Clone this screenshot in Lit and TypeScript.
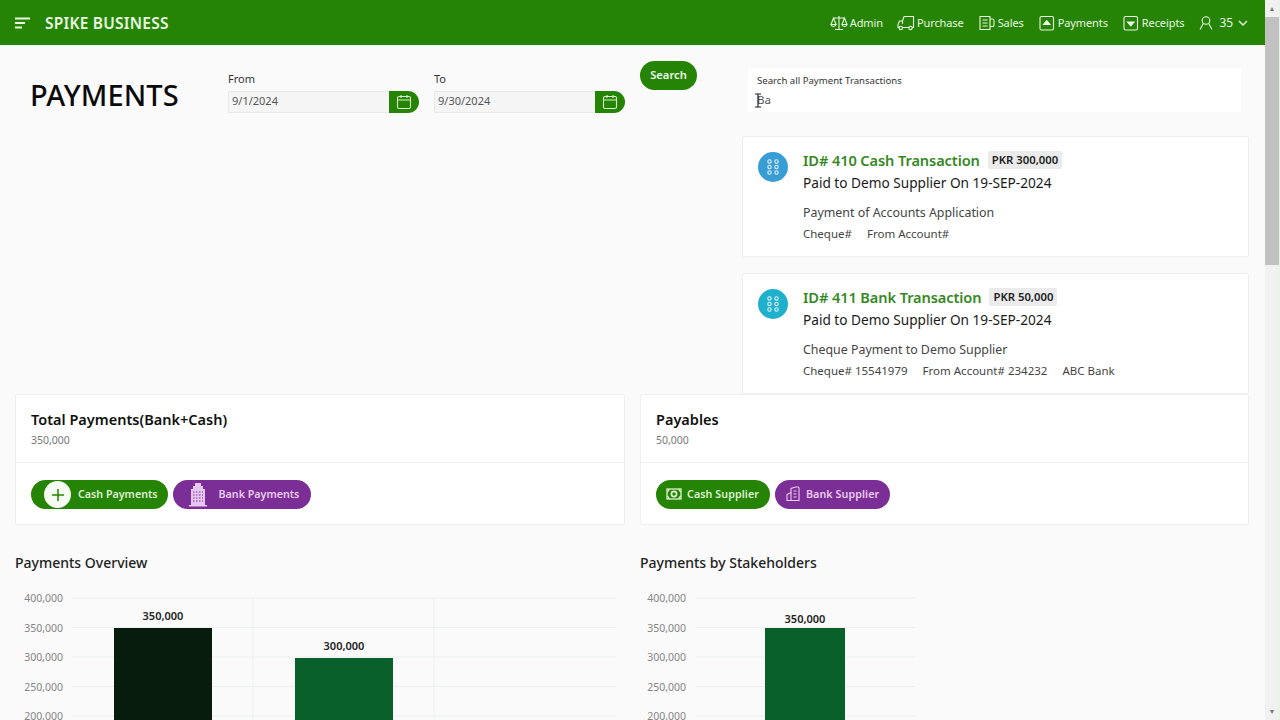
import { LitElement, html, css, svg } from "lit";
import { customElement } from "lit/decorators.js";

const navItems = [
  {
    label: "Admin",
    icon: svg`<path d="M9 2v13M5 15.500h8M3.500 4h11M3.500 4 1 10.500h5L3.500 4ZM14.500 4 12 10.500h5L14.500 4ZM1 10.500c.4 2.600 4.600 2.600 5 0M12 10.500c.4 2.600 4.600 2.600 5 0"/>`,
  },
  {
    label: "Purchase",
    icon: svg`<path d="M6 13.500h6.500M7 2.500h9.500v11H15M7 2.500 5.500 7H2.500L1 10.500v3h1M5.500 7v3"/><circle cx="3.800" cy="14" r="1.700"/><circle cx="13.500" cy="14" r="1.700"/>`,
  },
  {
    label: "Sales",
    icon: svg`<path d="M2 2.500h10v13H2zM4.500 6h5M4.500 9h5M4.500 12h5M12 5h2.500a1.500 1.500 0 0 1 1.500 1.500V11a1.500 1.500 0 0 1-1.500 1.500H12"/>`,
  },
  {
    label: "Payments",
    icon: svg`<rect x="2" y="2.500" width="13.500" height="13.500" rx="1.500"/><path d="M8.750 6.500 12 10.500H5.500Z" fill="currentColor"/>`,
  },
  {
    label: "Receipts",
    icon: svg`<rect x="2" y="2.500" width="13.500" height="13.500" rx="1.500"/><path d="M8.750 12 12 8H5.500Z" fill="currentColor"/>`,
  },
];

const transactions = [
  {
    id: "ID# 410 Cash Transaction",
    amount: "PKR 300,000",
    color: "#389dd4",
    note: "Payment of Accounts Application",
    meta: ["Cheque#", "From Account#"],
  },
  {
    id: "ID# 411 Bank Transaction",
    amount: "PKR 50,000",
    color: "#1fb0cc",
    note: "Cheque Payment to Demo Supplier",
    meta: ["Cheque# 15541979", "From Account# 234232", "ABC Bank"],
  },
];

const ticks = ["400,000", "350,000", "300,000", "250,000", "200,000"];

const calendar = html`<svg viewBox="0 0 16 16" width="16" height="16" fill="none" stroke="currentColor" stroke-width="1.100">
  <rect x="1.500" y="2.500" width="13" height="12" rx="1.500"></rect>
  <path d="M1.500 6h13M5 1v3M11 1v3"></path>
</svg>`;

@customElement("app-root")
export class AppRoot extends LitElement {
  static override styles = css`
    :host {
      display: flex;
      width: 1280px;
      height: 720px;
      overflow: hidden;
      background: #fafafa;
      font-family: "Noto Sans", "Open Sans", sans-serif;
      color: #111;
    }
    .page {
      width: 1265px;
      flex: none;
    }
    .scrollbar {
      width: 15px;
      flex: none;
      display: flex;
      flex-direction: column;
      align-items: stretch;
      background: #f1f1f1;
      box-sizing: border-box;
      border-right: 1px solid #e4f5e0;
    }
    .arrow {
      height: 17px;
      display: flex;
      align-items: center;
      justify-content: center;
      color: #7a7a7a;
      font-size: 7px;
      line-height: 1;
    }
    .thumb {
      height: 248px;
      background: #c1c1c1;
    }
    .track {
      flex: 1;
    }
    .bar {
      height: 45px;
      background: #268404;
      color: #e9f7e2;
      display: flex;
      align-items: center;
      padding: 0 17px 0 15px;
      box-sizing: border-box;
    }
    .burger {
      display: block;
      margin-right: 14px;
    }
    .brand {
      font-size: 15.500px;
      font-weight: 600;
      letter-spacing: 0.220px;
      flex: 1;
    }
    .nav {
      display: flex;
      align-items: center;
      gap: 14px;
      font-size: 11px;
      letter-spacing: -0.100px;
    }
    .nav-item {
      display: flex;
      align-items: center;
      gap: 2px;
    }
    .nav-item svg {
      display: block;
      fill: none;
      stroke: currentColor;
      stroke-width: 1.100;
    }
    .user {
      font-size: 12px;
    }
    .top {
      display: grid;
      grid-template-columns: 610px 609px;
      gap: 15px;
      height: 349px;
      padding-left: 15px;
      overflow: hidden;
    }
    .filters {
      display: flex;
      align-items: flex-start;
      gap: 15px;
      padding: 27px 0 0 15px;
    }
    h1 {
      margin: 3px 34px 0 0;
      width: 149px;
      font-size: 29px;
      line-height: 40px;
      font-weight: 500;
      letter-spacing: 0.100px;
      color: #0b0b0b;
      white-space: nowrap;
    }
    .field {
      width: 191px;
    }
    .field label {
      display: block;
      font-size: 11px;
      line-height: 13px;
      color: #333;
      margin-bottom: 6px;
    }
    .date {
      display: flex;
      height: 22px;
    }
    .date-value {
      flex: 1;
      background: #f5f5f5;
      border: 1px solid #e8e8e8;
      border-right: 0;
      box-sizing: border-box;
      font-size: 11px;
      line-height: 18px;
      color: #555;
      padding-left: 3px;
      border-radius: 2px 0 0 2px;
    }
    .date-btn {
      width: 30px;
      background: #268404;
      color: #d8efcf;
      border-radius: 0 11px 11px 0;
      display: flex;
      align-items: center;
      justify-content: center;
    }
    .results {
      display: flex;
    }
    .search-col {
      width: 102px;
      flex: none;
      padding-top: 16px;
    }
    .search-btn {
      display: inline-block;
      width: 57px;
      height: 29px;
      line-height: 28px;
      text-align: center;
      border-radius: 15px;
      background: #268404;
      color: #eef8e9;
      font-size: 11.200px;
      font-weight: 600;
    }
    .list {
      flex: 1;
      min-width: 0;
    }
    .search-box {
      position: relative;
      height: 44px;
      margin: 23px 8px 24px 6px;
      padding: 6px 9px;
      background: #fff;
      box-sizing: border-box;
    }
    .search-box label {
      display: block;
      font-size: 9.600px;
      line-height: 14px;
      color: #333;
    }
    .search-text {
      font-size: 11.500px;
      line-height: 16px;
      margin-top: 4px;
      color: #555;
    }
    .ibeam {
      position: absolute;
      left: 6px;
      top: 25px;
    }
    .tx {
      display: flex;
      height: 121px;
      box-sizing: border-box;
      margin-bottom: 16px;
      padding: 15px;
      background: #fff;
      border: 1px solid #efefef;
      border-radius: 2px;
    }
    .tx-icon {
      width: 30px;
      height: 30px;
      border-radius: 50%;
      flex: none;
      margin-right: 15px;
      display: flex;
      align-items: center;
      justify-content: center;
    }
    .tx-title {
      display: flex;
      align-items: center;
      gap: 8px;
      height: 20px;
      margin-top: -2px;
    }
    .tx-id {
      font-size: 14.600px;
      font-weight: 600;
      color: #35891f;
      letter-spacing: -0.100px;
    }
    .tx-amount {
      background: #ebebeb;
      border-radius: 2px;
      font-size: 11.300px;
      font-weight: 600;
      line-height: 18px;
      padding: 0 4px;
      color: #222;
    }
    .tx-sub {
      font-size: 13.650px;
      line-height: 18px;
      margin-top: 4px;
      color: #1a1a1a;
    }
    .tx-note {
      font-size: 12.400px;
      line-height: 16px;
      margin-top: 13px;
      color: #444;
    }
    .tx-meta {
      display: flex;
      gap: 15px;
      font-size: 11.500px;
      line-height: 16px;
      margin-top: 5px;
      color: #444;
    }
    .cards {
      display: grid;
      grid-template-columns: 610px 609px;
      gap: 15px;
      padding-left: 15px;
    }
    .card {
      height: 131px;
      background: #fff;
      border: 1px solid #efefef;
      box-sizing: border-box;
      border-radius: 2px;
    }
    .card-head {
      height: 68px;
      padding: 14px 15px 0;
      box-sizing: border-box;
      border-bottom: 1px solid #f0f0f0;
    }
    .card-title {
      font-size: 14.500px;
      line-height: 20px;
      font-weight: 600;
      color: #111;
    }
    .card-value {
      font-size: 10.500px;
      line-height: 14px;
      margin-top: 4px;
      color: #777;
    }
    .pills {
      display: flex;
      gap: 5px;
      padding: 17px 15px 0;
    }
    .pill {
      height: 29px;
      border-radius: 15px;
      display: flex;
      align-items: center;
      gap: 5px;
      padding: 0 12px 2px 10px;
      box-sizing: border-box;
      font-size: 10.700px;
      font-weight: 600;
      white-space: nowrap;
    }
    .pill.green {
      background: #268404;
      color: #dff2d6;
    }
    .pill.purple {
      background: #7b2f96;
      color: #eacdf2;
    }
    .pill.wide {
      gap: 7px;
      padding: 0 10px 2px 13px;
    }
    .pill.building {
      gap: 9px;
      padding-left: 13px;
    }
    .pill.supplier {
      padding-right: 11px;
      letter-spacing: 0.080px;
    }
    .plus {
      width: 27px;
      height: 27px;
      margin-top: 2px;
      border-radius: 50%;
      background: #f6fbf3;
      color: #268404;
      display: flex;
      align-items: center;
      justify-content: center;
    }
    .building-icon {
      margin-top: 2px;
    }
    .charts {
      display: grid;
      grid-template-columns: 625px 625px;
      padding: 28px 0 0 15px;
    }
    h2 {
      margin: 0;
      font-size: 14px;
      line-height: 20px;
      font-weight: 500;
      color: #222;
    }
    .chart {
      display: block;
      margin: 15px 0 0 -15px;
    }
    .chart text {
      font-family: "Noto Sans", "Open Sans", sans-serif;
    }
    .tick {
      font-size: 10.500px;
      fill: #858585;
      text-anchor: end;
    }
    .value {
      font-size: 11px;
      font-weight: 600;
      fill: #222;
      text-anchor: middle;
    }
  `;

  private _dots() {
    return html`<svg viewBox="0 0 16 16" width="16" height="16" fill="none" stroke="#fff" stroke-opacity=".85" stroke-width="1.100">
      ${[2.5, 8, 13.5].map((y) =>
        [4.5, 11.5].map((x) => svg`<circle cx=${x} cy=${y} r="1.700"></circle>`)
      )}
    </svg>`;
  }

  private _chart(
    width: number,
    x0: number,
    x1: number,
    labelX: number,
    bars: { x: number; w: number; top: number; color: string; value: string; labelY: number }[],
    verticals: number[]
  ) {
    // one tick every 29.5px, the svg runs past the bottom of the window
    const rowY = (i: number) => 10 + i * 29.5;
    const h = 140;
    return html`<svg class="chart" width=${width} height=${h} viewBox="0 0 ${width} ${h}">
      ${ticks.map(
        (t, i) => svg`
          <line x1=${x0} x2=${x1} y1=${rowY(i)} y2=${rowY(i)} stroke="#edf0f0"></line>
          <text class="tick" x=${labelX} y=${rowY(i) + 4}>${t}</text>`
      )}
      ${verticals.map((x) => svg`<line x1=${x} x2=${x} y1="10" y2=${h} stroke="#edf0f0"></line>`)}
      ${bars.map(
        (b) => svg`
          <rect x=${b.x} y=${b.top} width=${b.w} height=${h - b.top} fill=${b.color}></rect>
          <text class="value" x=${b.x + b.w / 2} y=${b.labelY}>${b.value}</text>`
      )}
    </svg>`;
  }

  override render() {
    return html`
      <div class="page">
        <header class="bar">
          <svg class="burger" width="16" height="12" viewBox="0 0 16 12" stroke="currentColor" stroke-width="1.800">
            <path d="M0 1.500h15M0 6h10M0 10.500h7"></path>
          </svg>
          <div class="brand">SPIKE BUSINESS</div>
          <nav class="nav">
            ${navItems.map(
              (n) => html`<div class="nav-item">
                <svg width="18" height="18" viewBox="0 0 18 18">${n.icon}</svg>${n.label}
              </div>`
            )}
            <div class="nav-item user">
              <svg width="16" height="16" viewBox="0 0 16 16">
                <circle cx="8" cy="5.500" r="3.800"></circle>
                <path d="M5.300 8.500 2 14.500M10.700 8.500l3.300 6"></path>
              </svg>
              <span>&nbsp;35&nbsp;</span>
              <svg width="10" height="8" viewBox="0 0 10 8"><path d="M1 2l4 4 4-4" stroke-width="1.400"></path></svg>
            </div>
          </nav>
        </header>

        <section class="top">
          <div class="filters">
            <h1>PAYMENTS</h1>
            <div class="field">
              <label>From</label>
              <div class="date"><div class="date-value">9/1/2024</div><div class="date-btn">${calendar}</div></div>
            </div>
            <div class="field">
              <label>To</label>
              <div class="date"><div class="date-value">9/30/2024</div><div class="date-btn">${calendar}</div></div>
            </div>
          </div>
          <div class="results">
            <div class="search-col"><span class="search-btn">Search</span></div>
            <div class="list">
              <div class="search-box">
                <label>Search all Payment Transactions</label>
                <div class="search-text">Ba</div>
                <svg class="ibeam" width="8" height="15" viewBox="0 0 8 15" fill="none" stroke="#222" stroke-width="1.200">
                  <path d="M1 1h6M4 1v13M1 14h6"></path>
                </svg>
              </div>
              ${transactions.map(
                (t) => html`<article class="tx">
                  <div class="tx-icon" style="background:${t.color}">${this._dots()}</div>
                  <div>
                    <div class="tx-title">
                      <span class="tx-id">${t.id}</span>
                      <span class="tx-amount">${t.amount}</span>
                    </div>
                    <div class="tx-sub">Paid to Demo Supplier On 19-SEP-2024</div>
                    <div class="tx-note">${t.note}</div>
                    <div class="tx-meta">${t.meta.map((m) => html`<span>${m}</span>`)}</div>
                  </div>
                </article>`
              )}
            </div>
          </div>
        </section>

        <section class="cards">
          <div class="card">
            <div class="card-head">
              <div class="card-title">Total Payments(Bank+Cash)</div>
              <div class="card-value">350,000</div>
            </div>
            <div class="pills">
              <div class="pill green wide">
                <span class="plus">
                  <svg width="12" height="12" viewBox="0 0 12 12" stroke="currentColor" stroke-width="1.500"><path d="M6 0v12M0 6h12"></path></svg>
                </span>
                Cash Payments
              </div>
              <div class="pill purple building">
                <svg class="building-icon" width="24" height="26" viewBox="1 0 24 26">
                  <path fill="#e6c8ef" d="M10 1h6v3h2v3h2v16h2v1.500H4V23h2V7h2V4h2z"></path>
                  <path stroke="#7b2f96" stroke-width="1" stroke-dasharray="1.500 1.500" d="M8 10h10M8 13h10M8 16h10M8 19h10"></path>
                </svg>
                Bank Payments
              </div>
            </div>
          </div>
          <div class="card">
            <div class="card-head">
              <div class="card-title">Payables</div>
              <div class="card-value">50,000</div>
            </div>
            <div class="pills">
              <div class="pill green supplier">
                <svg width="16" height="12" viewBox="0 0 16 12" fill="none" stroke="currentColor" stroke-width="1.300">
                  <rect x="1" y="1" width="14" height="10"></rect>
                  <circle cx="8" cy="6" r="2.600" stroke-width="1.600"></circle>
                  <path d="M1 4a3 3 0 0 0 2-3M15 4a3 3 0 0 1-2-3M1 8a3 3 0 0 1 2 3M15 8a3 3 0 0 0-2 3"></path>
                </svg>
                Cash Supplier
              </div>
              <div class="pill purple supplier">
                <svg width="16" height="16" viewBox="0 0 16 16" fill="none" stroke="currentColor" stroke-width="1.100">
                  <path d="M6 14.500V2.500L10.500 1h2.500a1 1 0 0 1 1 1v12.500zM6 6.500 2 8.500v6h12M8.500 5h3M8.500 8h3M8.500 11h3"></path>
                </svg>
                Bank Supplier
              </div>
            </div>
          </div>
        </section>

        <section class="charts">
          <div>
            <h2>Payments Overview</h2>
            ${this._chart(
              625,
              72,
              616,
              63,
              [
                { x: 114, w: 98, top: 40, color: "#071c0c", value: "350,000", labelY: 32 },
                { x: 295, w: 98, top: 70, color: "#09602a", value: "300,000", labelY: 62 },
              ],
              [253, 434]
            )}
          </div>
          <div>
            <h2>Payments by Stakeholders</h2>
            ${this._chart(
              625,
              71,
              290,
              61,
              [{ x: 140, w: 80, top: 40, color: "#09602a", value: "350,000", labelY: 35 }],
              []
            )}
          </div>
        </section>
      </div>
      <aside class="scrollbar">
        <div class="arrow">▲</div>
        <div class="thumb"></div>
        <div class="track"></div>
        <div class="arrow">▼</div>
      </aside>
    `;
  }
}
